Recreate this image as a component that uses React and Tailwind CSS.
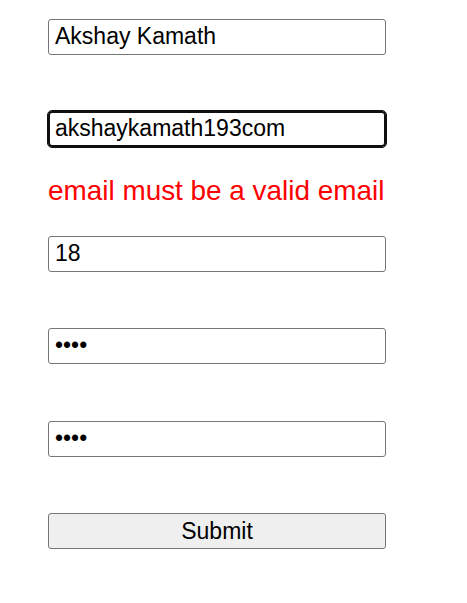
import React from "react";

const inputBase =
  "block w-[338px] h-[36px] rounded-[3px] border border-[#767676] bg-white px-[6px] pb-[2px] text-[23px] text-black outline-none";

export default function App() {
  return (
    <div
      className="min-h-[603px] w-full bg-white pl-[48px] pt-[19px]"
      style={{ fontFamily: '"Liberation Sans", Arial, sans-serif' }}
    >
      <form className="flex flex-col" onSubmit={(e) => e.preventDefault()}>
        <input
          type="text"
          defaultValue="Akshay Kamath"
          className={`${inputBase} mb-[56px]`}
        />
        <input
          type="text"
          defaultValue="akshaykamath193com"
          className="block w-[338px] h-[36px] rounded-[4px] border-2 border-[#101010] bg-white px-[5px] pb-[2px] text-[23px] text-black outline-1 outline-solid outline-[#101010] outline-offset-0 mb-[28px]"
        />
        <p className="text-[27.9px] leading-[32px] text-[#ff0000] mb-[29px]">
          email must be a valid email
        </p>
        <input
          type="text"
          defaultValue="18"
          className={`${inputBase} mb-[56px]`}
        />
        <input
          type="password"
          defaultValue="1234"
          className={`${inputBase} mb-[57px]`}
        />
        <input
          type="password"
          defaultValue="1234"
          className={`${inputBase} mb-[56px]`}
        />
        <button
          type="submit"
          className="block w-[338px] h-[36px] rounded-[3px] border border-[#767676] bg-[#efefef] pb-[2px] text-[23px] text-black"
        >
          Submit
        </button>
      </form>
    </div>
  );
}
